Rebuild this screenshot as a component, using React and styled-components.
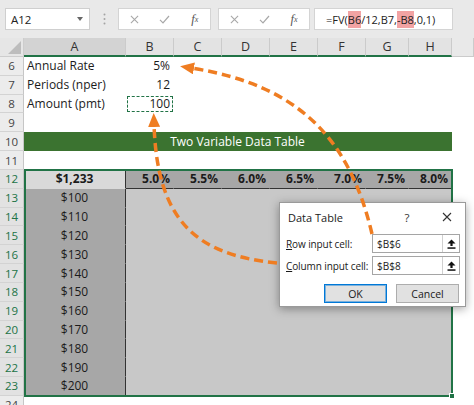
import React from 'react';
import styled, { createGlobalStyle } from 'styled-components';

const GlobalStyle = createGlobalStyle`
  html, body { margin: 0; padding: 0; background: #fff; }
  body { overflow: hidden; }
  *, *::before, *::after { box-sizing: border-box; }
`;

const UI = `"Open Sans", "Noto Sans", sans-serif`;
const GREEN = '#217346';
const ORANGE = '#ef7d22';

const Frame = styled.div`
  position: relative;
  width: 474px;
  height: 405px;
  overflow: hidden;
  background: #fff;
  font-family: ${UI};
`;

/* ---------- formula bar ---------- */
const FormulaBar = styled.div`
  height: 38px;
  background: #e9e9e9;
  display: flex;
  align-items: flex-start;
  padding: 8px 0 0 5px;
`;

const NameBox = styled.div`
  width: 85px;
  height: 22px;
  background: #fff;
  border: 1px solid #cfcfcf;
  display: flex;
  align-items: center;
  justify-content: space-between;
  padding: 0 6px 0 5px;
  font-size: 11.5px;
  color: #222;
`;

const Caret = styled.span`
  width: 0;
  height: 0;
  border-left: 3.5px solid transparent;
  border-right: 3.5px solid transparent;
  border-top: 4px solid #666;
`;

const Grip = styled.div`
  width: 28px;
  height: 22px;
  display: flex;
  align-items: center;
  justify-content: center;
`;

const FxGroup = styled.div`
  width: ${p => p.$w}px;
  height: 22px;
  margin-right: ${p => p.$gap}px;
  background: #fff;
  border: 1px solid #d4d4d4;
  display: flex;
  align-items: center;
`;

const FxButton = styled.span`
  width: 31px;
  height: 20px;
  display: flex;
  align-items: center;
  justify-content: center;
  color: #555;
  font-family: "Liberation Serif", serif;
  font-size: 12.5px;
  font-style: italic;
  & sub { font-size: 8px; vertical-align: -1px; }
`;

const FormulaBox = styled.div`
  width: 139px;
  height: 22px;
  background: #fff;
  border: 1px solid #d4d4d4;
  display: flex;
  align-items: center;
  padding-left: 11px;
  font-size: 11px;
  color: #222;
  white-space: nowrap;
`;

const Ref = styled.span`
  background: #f2a3a3;
  padding: 1px 0;
`;

/* ---------- sheet grid ---------- */
const Grid = styled.div`
  display: grid;
  grid-template-columns: 24px 102px 48px 48px 48px 48px 48px 43px 43px 1fr;
  grid-template-rows: 19px;
  grid-auto-rows: 18.83px;
`;

const Corner = styled.div`
  background: #e6e6e6;
  border-right: 1px solid #cdcdcd;
  border-bottom: 1px solid #cdcdcd;
  display: flex;
  align-items: flex-end;
  justify-content: flex-end;
  padding: 0 2px 2px 0;
  &::after {
    content: '';
    width: 0;
    height: 0;
    border-left: 13px solid transparent;
    border-bottom: 13px solid #bdbdbd;
  }
`;

const ColHead = styled.div`
  background: ${p => (p.$active ? '#d3d3d3' : p.$sel ? '#e3e3e3' : '#e9e9e9')};
  border-right: 1px solid #cbcbcb;
  border-bottom: ${p => (p.$sel ? `2px solid ${GREEN}` : '1px solid #cbcbcb')};
  color: #333;
  font-size: 12.5px;
  display: flex;
  align-items: center;
  justify-content: center;
`;

const RowHead = styled.div`
  background: ${p => (p.$sel ? '#e2e2e2' : '#ececec')};
  color: ${p => (p.$sel ? GREEN : '#444')};
  border-bottom: 1px solid #d3d3d3;
  border-right: 1px solid #c6c6c6;
  font-size: 11.5px;
  display: flex;
  align-items: center;
  justify-content: center;
`;

const Cell = styled.div`
  grid-column: ${p => (p.$span ? `span ${p.$span}` : 'auto')};
  background: ${p => p.$bg || '#fff'};
  border-right: 1px solid ${p => p.$right || 'transparent'};
  border-bottom: 1px solid ${p => p.$bottom || 'transparent'};
  display: flex;
  align-items: center;
  justify-content: ${p =>
    p.$align === 'right' ? 'flex-end' : p.$align === 'center' ? 'center' : 'flex-start'};
  padding: 0 3px 0 3px;
  font-size: 12px;
  font-weight: ${p => (p.$bold ? 700 : 400)};
  color: ${p => p.$color || '#1b1b1b'};
  white-space: nowrap;
  outline: ${p => (p.$ants ? `1.5px dashed ${GREEN}` : 'none')};
  outline-offset: -2px;
`;

/* ---------- overlays ---------- */
const Selection = styled.div`
  position: absolute;
  left: 24px;
  top: 169px;
  width: 429px;
  height: 228px;
  border: 2px solid ${GREEN};
  pointer-events: none;
`;

const FillHandle = styled.div`
  position: absolute;
  right: -4px;
  bottom: -4px;
  width: 6px;
  height: 6px;
  background: ${GREEN};
  border: 1px solid #fff;
`;

const Dialog = styled.div`
  position: absolute;
  left: 279px;
  top: 202px;
  width: 187px;
  height: 105px;
  background: #fff;
  border: 1px solid #9a9a9a;
  box-shadow: 0 2px 9px rgba(0, 0, 0, 0.35);
  padding: 0 5px 0 6px;
  font-size: 10px;
  color: #1a1a1a;
  display: flex;
  flex-direction: column;
`;

const TitleRow = styled.div`
  height: 28px;
  margin-bottom: 3px;
  display: flex;
  align-items: center;
  padding-left: 2px;
  font-size: 11px;
`;

const Title = styled.span`
  flex: 1;
`;

const Help = styled.span`
  width: 22px;
  text-align: center;
  font-size: 11.5px;
  color: #333;
`;

const Close = styled.span`
  width: 26px;
  margin-left: 16px;
  display: flex;
  justify-content: center;
`;

const FieldRow = styled.div`
  height: 19px;
  margin-top: ${p => p.$mt || 0}px;
  display: flex;
  align-items: center;
`;

const Label = styled.span`
  flex: 1;
  white-space: nowrap;
  letter-spacing: -0.1px;
`;

const Input = styled.div`
  width: 88px;
  height: 19px;
  border: 1px solid #a5a5a5;
  display: flex;
  align-items: center;
  padding-left: 4px;
  font-size: 10px;
`;

const InputText = styled.span`
  flex: 1;
`;

const RefButton = styled.span`
  width: 17px;
  height: 17px;
  border-left: 1px solid #d0d0d0;
  display: flex;
  align-items: center;
  justify-content: center;
`;

const ButtonRow = styled.div`
  margin-top: 9px;
  display: flex;
  justify-content: flex-end;
  gap: 9px;
  padding-right: 1px;
`;

const Button = styled.div`
  width: 63px;
  height: 19px;
  background: #e1e1e1;
  border: 1px solid ${p => (p.$primary ? '#0078d7' : '#adadad')};
  box-shadow: ${p => (p.$primary ? 'inset 0 0 0 1px rgba(0,120,215,0.45)' : 'none')};
  display: flex;
  align-items: center;
  justify-content: center;
  font-size: 10.5px;
`;

const Arrows = styled.svg`
  position: absolute;
  left: 0;
  top: 0;
  width: 474px;
  height: 405px;
  pointer-events: none;
`;

/* ---------- icons ---------- */
const XIcon = ({ size = 9, color = '#a8a8a8', w = 1.2 }) => (
  <svg width={size} height={size} viewBox="0 0 10 10">
    <path d="M1 1 L9 9 M9 1 L1 9" stroke={color} strokeWidth={w} fill="none" />
  </svg>
);

const CheckIcon = () => (
  <svg width="11" height="9" viewBox="0 0 11 9">
    <path d="M1 4.8 L4 7.8 L10 1" stroke="#a8a8a8" strokeWidth="1.2" fill="none" />
  </svg>
);

const Dots = () => (
  <svg width="3" height="12" viewBox="0 0 3 12">
    <circle cx="1.5" cy="1.5" r="1" fill="#a3a3a3" />
    <circle cx="1.5" cy="6" r="1" fill="#a3a3a3" />
    <circle cx="1.5" cy="10.5" r="1" fill="#a3a3a3" />
  </svg>
);

const UpArrow = () => (
  <svg width="9" height="10" viewBox="0 0 9 10">
    <path d="M4.5 0.5 L8.5 4.5 L5.6 4.5 L5.6 7 L3.4 7 L3.4 4.5 L0.5 4.5 Z" fill="#111" />
    <rect x="0.5" y="8.3" width="8" height="1.5" fill="#111" />
  </svg>
);

const FxGroupContent = () => (
  <>
    <FxButton><XIcon /></FxButton>
    <FxButton><CheckIcon /></FxButton>
    <FxButton><i>f</i><sub>x</sub></FxButton>
  </>
);

/* ---------- data ---------- */
const COLS = ['A', 'B', 'C', 'D', 'E', 'F', 'G', 'H'];
const RATES = ['5.0%', '5.5%', '6.0%', '6.5%', '7.0%', '7.5%', '8.0%'];
const AMOUNTS = ['$100', '$110', '$120', '$130', '$140', '$150', '$160', '$170', '$180', '$190', '$200'];
const DARK = '#a7a7a7';
const MID = '#c8c8c8';

function renderRows() {
  const out = [];
  const inputs = [
    [6, 'Annual Rate', '5%'],
    [7, 'Periods (nper)', '12'],
    [8, 'Amount (pmt)', '100'],
  ];
  inputs.forEach(([n, label, val]) => {
    out.push(<RowHead key={`h${n}`}>{n}</RowHead>);
    out.push(<Cell key={`a${n}`}>{label}</Cell>);
    out.push(<Cell key={`b${n}`} $align="right" $ants={n === 8}>{val}</Cell>);
    out.push(<Cell key={`r${n}`} $span={7} />);
  });

  out.push(<RowHead key="h9">9</RowHead>);
  out.push(<Cell key="r9" $span={9} />);

  out.push(<RowHead key="h10">10</RowHead>);
  out.push(
    <Cell key="t10" $span={8} $bg="#3b7330" $color="#fff" $align="center">
      Two Variable Data Table
    </Cell>
  );
  out.push(<Cell key="i10" />);

  out.push(<RowHead key="h11">11</RowHead>);
  out.push(<Cell key="r11" $span={9} />);

  out.push(<RowHead key="h12" $sel>12</RowHead>);
  out.push(
    <Cell key="a12" $bg="#d9d9d9" $bold $align="center" $right="#333">
      $1,233
    </Cell>
  );
  RATES.forEach(r => {
    out.push(
      <Cell key={`r12${r}`} $bg={DARK} $bold $align="right" $bottom="#333">
        {r}
      </Cell>
    );
  });
  out.push(<Cell key="i12" />);

  AMOUNTS.forEach((amt, i) => {
    const n = 13 + i;
    out.push(<RowHead key={`h${n}`} $sel>{n}</RowHead>);
    out.push(
      <Cell key={`a${n}`} $bg={DARK} $align="center" $right="#333">
        {amt}
      </Cell>
    );
    out.push(<Cell key={`m${n}`} $span={7} $bg={MID} />);
    out.push(<Cell key={`i${n}`} />);
  });

  out.push(<RowHead key="h24">24</RowHead>);
  out.push(<Cell key="r24" $span={9} />);
  return out;
}

export default function App() {
  return (
    <>
      <GlobalStyle />
      <Frame>
        <FormulaBar>
          <NameBox>
            <span>A12</span>
            <Caret />
          </NameBox>
          <Grip><Dots /></Grip>
          <FxGroup $w={93} $gap={7}><FxGroupContent /></FxGroup>
          <FxGroup $w={92} $gap={4}><FxGroupContent /></FxGroup>
          <FormulaBox>
            =FV(<Ref>B6</Ref>/12,B7,<Ref>-B8</Ref>,0,1)
          </FormulaBox>
        </FormulaBar>

        <Grid>
          <Corner />
          {COLS.map(c => (
            <ColHead key={c} $sel $active={c === 'A'}>{c}</ColHead>
          ))}
          <ColHead />
          {renderRows()}
        </Grid>

        <Selection>
          <FillHandle />
        </Selection>

        <Dialog>
          <TitleRow>
            <Title>Data Table</Title>
            <Help>?</Help>
            <Close><XIcon size={10} color="#333" w={1.1} /></Close>
          </TitleRow>
          <FieldRow>
            <Label><u>R</u>ow input cell:</Label>
            <Input>
              <InputText>$B$6</InputText>
              <RefButton><UpArrow /></RefButton>
            </Input>
          </FieldRow>
          <FieldRow $mt={3}>
            <Label><u>C</u>olumn input cell:</Label>
            <Input>
              <InputText>$B$8</InputText>
              <RefButton><UpArrow /></RefButton>
            </Input>
          </FieldRow>
          <ButtonRow>
            <Button $primary>OK</Button>
            <Button>Cancel</Button>
          </ButtonRow>
        </Dialog>

        <Arrows viewBox="0 0 474 405">
          <defs>
            <marker
              id="head"
              markerUnits="userSpaceOnUse"
              markerWidth="14"
              markerHeight="12"
              refX="3"
              refY="6"
              orient="auto"
            >
              <path d="M0 0 L14 6 L0 12 Z" fill={ORANGE} />
            </marker>
          </defs>
          <path
            d="M372 234 C350 140 300 85 191 68"
            stroke={ORANGE}
            strokeWidth="3.5"
            strokeDasharray="9 5"
            fill="none"
            markerEnd="url(#head)"
          />
          <path
            d="M277 263 C195 255 157 220 154 124"
            stroke={ORANGE}
            strokeWidth="3.5"
            strokeDasharray="9 5"
            fill="none"
            markerEnd="url(#head)"
          />
        </Arrows>
      </Frame>
    </>
  );
}
